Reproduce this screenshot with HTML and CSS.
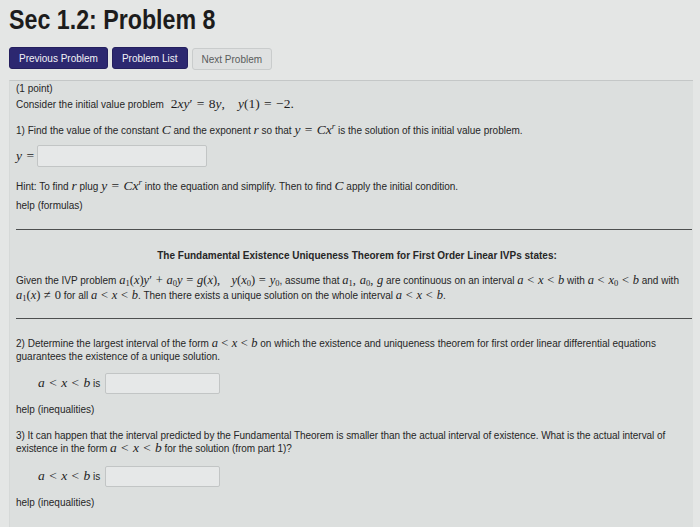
FILE: index.html
```html
<!DOCTYPE html>
<html>
<head>
<meta charset="utf-8">
<link rel="stylesheet" href="styles.css">
</head>
<body>
<h1 class="title">Sec 1.2: Problem 8</h1>
<div class="nav">
  <span class="btn btn-dark">Previous Problem</span>
  <span class="btn btn-dark">Problem List</span>
  <span class="btn btn-light">Next Problem</span>
</div>
<div class="panel">
  <div class="line">(1 point)</div>
  <div class="line consider">Consider the initial value problem <span class="m m-eq">2<i>xy</i>′ = 8<i>y</i>, &nbsp;&nbsp;<i>y</i>(1) = −2.</span></div>
  <div class="line q1">1) Find the value of the constant <span class="m"><i>C</i></span> and the exponent <span class="m"><i>r</i></span> so that <span class="m"><i>y</i> = <i>Cx</i><sup><i>r</i></sup></span> is the solution of this initial value problem.</div>
  <div class="ans ans1"><span class="m lbl"><i>y</i> =</span><span class="box box1"></span></div>
  <div class="line hint">Hint: To find <span class="m"><i>r</i></span> plug <span class="m"><i>y</i> = <i>Cx</i><sup><i>r</i></sup></span> into the equation and simplify. Then to find <span class="m"><i>C</i></span> apply the initial condition.</div>
  <div class="line help help1">help (formulas)</div>
  <div class="rule rule1"></div>
  <div class="thm-title">The Fundamental Existence Uniqueness Theorem for First Order Linear IVPs states:</div>
  <div class="thm">Given the IVP problem <span class="m"><i>a</i><sub>1</sub>(<i>x</i>)<i>y</i>′ + <i>a</i><sub>0</sub><i>y</i> = <i>g</i>(<i>x</i>), &nbsp;&nbsp;<i>y</i>(<i>x</i><sub>0</sub>) = <i>y</i><sub>0</sub></span>, assume that <span class="m"><i>a</i><sub>1</sub>, <i>a</i><sub>0</sub>, <i>g</i></span> are continuous on an interval <span class="m"><i>a</i> &lt; <i>x</i> &lt; <i>b</i></span> with <span class="m"><i>a</i> &lt; <i>x</i><sub>0</sub> &lt; <i>b</i></span> and with<br><span class="m"><i>a</i><sub>1</sub>(<i>x</i>) ≠ 0</span> for all <span class="m"><i>a</i> &lt; <i>x</i> &lt; <i>b</i></span>. Then there exists a unique solution on the whole interval <span class="m"><i>a</i> &lt; <i>x</i> &lt; <i>b</i></span>.</div>
  <div class="rule rule2"></div>
  <div class="para q2">2) Determine the largest interval of the form <span class="m"><i>a</i> &lt; <i>x</i> &lt; <i>b</i></span> on which the existence and uniqueness theorem for first order linear differential equations<br>guarantees the existence of a unique solution.</div>
  <div class="ans ans2"><span class="lbl2"><span class="m"><i>a</i> &lt; <i>x</i> &lt; <i>b</i></span> is</span><span class="box box2"></span></div>
  <div class="line help help2">help (inequalities)</div>
  <div class="para q3">3) It can happen that the interval predicted by the Fundamental Theorem is smaller than the actual interval of existence. What is the actual interval of<br>existence in the form <span class="m"><i>a</i> &lt; <i>x</i> &lt; <i>b</i></span> for the solution (from part 1)?</div>
  <div class="ans ans3"><span class="lbl2"><span class="m"><i>a</i> &lt; <i>x</i> &lt; <i>b</i></span> is</span><span class="box box2"></span></div>
  <div class="line help help3">help (inequalities)</div>
</div>
</body>
</html>
```
FILE: styles.css
```css
html, body {
  margin: 0;
  padding: 0;
}
body {
  background: #e4e6e5;
  font-family: "Liberation Sans", Arial, sans-serif;
  color: #262626;
  width: 700px;
  height: 527px;
  overflow: hidden;
  padding-left: 9px;
  box-sizing: border-box;
}
.title {
  margin: 0;
  padding-top: 5px;
  font-size: 27px;
  line-height: 31px;
  font-weight: bold;
  color: #1c1c1c;
  height: 40px;
  box-sizing: border-box;
  transform: scaleX(0.86);
  transform-origin: left center;
  white-space: nowrap;
}
.nav {
  display: flex;
  gap: 4px;
  height: 22px;
  margin-top: 7px;
}
.btn {
  display: flex;
  align-items: center;
  justify-content: center;
  height: 22px;
  box-sizing: border-box;
  border-radius: 3px;
  font-size: 10px;
}
.btn-dark {
  background: #2c2870;
  color: #f2f2f6;
  border: 1px solid #241f5e;
  padding: 0 9px;
}
.btn-light {
  background: #dfe1e1;
  color: #5a5c5c;
  border: 1px solid #c9cccc;
  padding: 0 9px;
  margin-top: 1px;
}
.panel {
  margin-top: 11px;
  width: 684px;
  height: 460px;
  box-sizing: border-box;
  background: #dcdfde;
  border-top: 1px solid #c4c7c7;
  border-left: 1px solid #d6d9d8;
  padding: 1px 1px 0 6px;
  font-size: 10px;
  line-height: 13px;
  white-space: nowrap;
}
.m {
  font-family: "Liberation Serif", "Times New Roman", serif;
  font-size: 13.5px;
  line-height: 12px;
  word-spacing: 1px;
  color: #1e1e1e;
}
.m i { font-style: italic; }
.m sup {
  font-size: 9px;
  vertical-align: 5px;
  line-height: 0;
}
.m sub {
  font-size: 9px;
  vertical-align: -2px;
  line-height: 0;
}
.m-eq { font-size: 13.5px; margin-left: 4px; word-spacing: 1px; }
.line { height: 13px; }
.consider { margin-top: 3px; }
.q1 { margin-top: 13px; }
.ans {
  display: flex;
  align-items: center;
}
.ans1 { margin-top: 8px; height: 22px; }
.lbl { width: 21px; }
.box {
  display: block;
  height: 22px;
  box-sizing: border-box;
  background: #e6e8e8;
  border: 1px solid #c2c5c5;
  border-radius: 2px;
}
.box1 { width: 170px; }
.box2 { width: 115px; height: 21px; }
.hint { margin-top: 13px; }
.help1 { margin-top: 6px; }
.rule {
  height: 0;
  border-top: 1.5px solid #4d4f4f;
}
.rule1 { margin-top: 17px; }
.thm-title {
  margin-top: 19px;
  font-weight: bold;
  text-align: center;
  height: 13px;
  padding-left: 6px;
}
.thm {
  margin-top: 11px;
  line-height: 15px;
}
.thm .m {
  font-size: 12.5px;
  word-spacing: 0.6px;
}
.thm .m sub { font-size: 8.5px; }
.rule2 { margin-top: 15px; }
.para { line-height: 12.5px; }
.q2 .m { font-size: 12.5px; word-spacing: 0.3px; }
.q2 { margin-top: 18px; }
.ans2 { margin-top: 9px; height: 22px; }
.ans3 { margin-top: 10px; height: 22px; }
.lbl2 {
  padding-left: 22px;
  width: 89px;
  box-sizing: border-box;
}
.help2 { margin-top: 9px; }
.q3 { margin-top: 13px; line-height: 13px; letter-spacing: -0.05px; }
.help3 { margin-top: 9px; }
```
